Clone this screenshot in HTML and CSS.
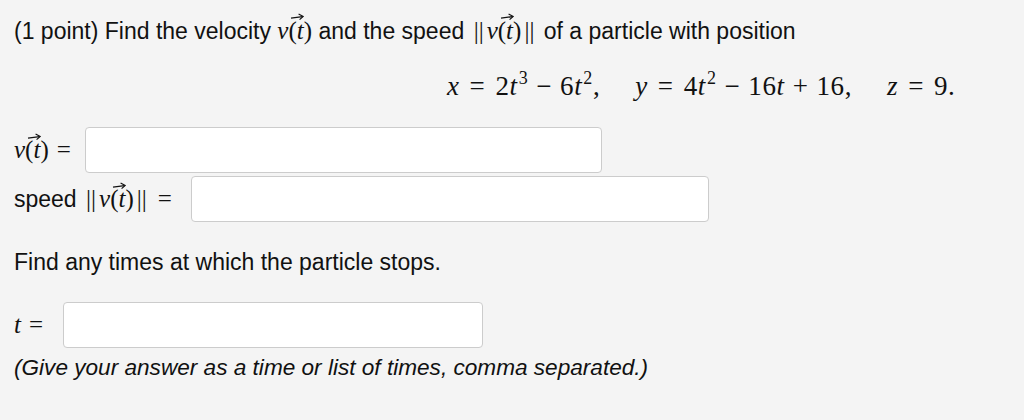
FILE: index.html
```html
<!DOCTYPE html>
<html>
<head>
<meta charset="utf-8">
<link rel="stylesheet" href="styles.css">
</head>
<body>
<div class="problem">
  <p class="intro">(1 point) Find the velocity <span class="m"><span class="mi">v</span><span class="vec">(<span class="mi">t</span><svg class="arrow" viewBox="0 0 14 8" width="14" height="8"><path d="M1 5.2 L12.5 3.6" stroke="#111" stroke-width="1.3" fill="none"/><path d="M8.6 1 L13.2 3.5 L9.6 6.6" stroke="#111" stroke-width="1.2" fill="none"/></svg></span>)</span> and the speed <span class="m"><span class="bars">||</span><span class="mi">v</span><span class="vec">(<span class="mi">t</span><svg class="arrow" viewBox="0 0 14 8" width="14" height="8"><path d="M1 5.2 L12.5 3.6" stroke="#111" stroke-width="1.3" fill="none"/><path d="M8.6 1 L13.2 3.5 L9.6 6.6" stroke="#111" stroke-width="1.2" fill="none"/></svg></span>)<span class="bars">||</span></span> of a particle with position</p>
  <div class="display">
    <span><span class="mi">x</span><span class="rel">=</span>2<span class="mi">t</span><sup>3</sup><span class="bin">−</span>6<span class="mi">t</span><sup>2</sup>,</span>
    <span><span class="mi">y</span><span class="rel">=</span>4<span class="mi">t</span><sup>2</sup><span class="bin">−</span>16<span class="mi">t</span><span class="bin">+</span>16,</span>
    <span><span class="mi">z</span><span class="rel">=</span>9.</span>
  </div>
  <div class="row r1">
    <span class="label m"><span class="mi">v</span><span class="vec">(<span class="mi">t</span><svg class="arrow" viewBox="0 0 14 8" width="14" height="8"><path d="M1 5.2 L12.5 3.6" stroke="#111" stroke-width="1.3" fill="none"/><path d="M8.6 1 L13.2 3.5 L9.6 6.6" stroke="#111" stroke-width="1.2" fill="none"/></svg></span>)<span class="rel">=</span></span>
    <span class="answer w1"></span>
  </div>
  <div class="row r2">
    <span class="label">speed <span class="m"><span class="bars">||</span><span class="mi">v</span><span class="vec">(<span class="mi">t</span><svg class="arrow" viewBox="0 0 14 8" width="14" height="8"><path d="M1 5.2 L12.5 3.6" stroke="#111" stroke-width="1.3" fill="none"/><path d="M8.6 1 L13.2 3.5 L9.6 6.6" stroke="#111" stroke-width="1.2" fill="none"/></svg></span>)<span class="bars">||</span><span class="rel">=</span></span></span>
    <span class="answer w2"></span>
  </div>
  <p class="q2">Find any times at which the particle stops.</p>
  <div class="row r3">
    <span class="label m tlabel"><span class="mi">t</span><span class="rel">=</span></span>
    <span class="answer w3"></span>
  </div>
  <p class="hint">(Give your answer as a time or list of times, comma separated.)</p>
</div>
</body>
</html>
```
FILE: styles.css
```css
html, body {
  margin: 0;
  padding: 0;
  background: #f4f4f4;
  width: 1024px;
  height: 420px;
  overflow: hidden;
}
.problem {
  padding: 16px 0 0 14px;
  font-family: "Liberation Sans", Arial, sans-serif;
  font-size: 23px;
  color: #111;
}
p { margin: 0; }
.intro { line-height: 30px; white-space: nowrap; }
.m {
  font-family: "Liberation Serif", "Times New Roman", serif;
  font-size: 25px;
}
.mi { font-style: italic; }
.vec { position: relative; display: inline-block; }
.arrow {
  position: absolute;
  left: 2px;
  top: -3px;
}
.bars { margin: 0 3px; }
.rel { margin: 0 8px; }
.bin { margin: 0 6px; }
sup { font-size: 18px; vertical-align: 11px; line-height: 0; margin-left: 1px; }
.display {
  font-family: "Liberation Serif", "Times New Roman", serif;
  font-size: 27px;
  letter-spacing: 0.6px;
  padding: 24px 0 0 433px;
  line-height: 32px;
  display: flex;
  gap: 35px;
}
.display .rel { margin: 0 10px; }
.display .bin { margin: 0 8px; }
.row {
  display: flex;
  align-items: center;
}
.label { margin-right: 6px; white-space: nowrap; }
.tlabel { margin-right: 12px; }
.r1 { margin-top: 25px; }
.r2 { margin-top: 3px; }
.r2 .label { margin-right: 11px; }
.r3 { margin-top: 25px; }
.answer {
  display: block;
  height: 44px;
  width: 515px;
  background: #fff;
  border: 1px solid #ccc;
  border-radius: 4px;
}
.w2 { width: 516px; }
.w3 { width: 418px; }
.q2 { margin-top: 25px; line-height: 30px; }
.hint { font-style: italic; font-size: 22.6px; margin-top: 5px; line-height: 30px; }
```
